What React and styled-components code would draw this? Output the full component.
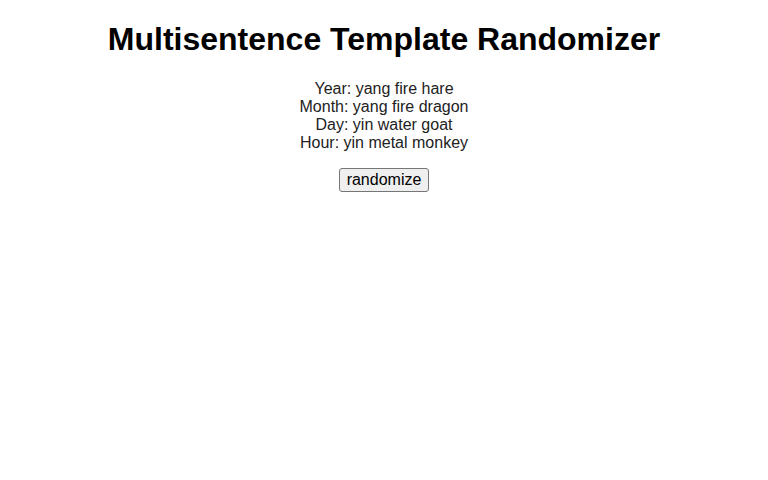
import React, { useState } from 'react';
import styled, { createGlobalStyle } from 'styled-components';

const GlobalStyle = createGlobalStyle`
	body {
		margin: 0;
		padding: 0 8px;
		font-family: 'Liberation Sans', Arial, sans-serif;
		background: #fff;
		color: #000;
	}
`;

const Page = styled.div`
	text-align: center;
`;

const Title = styled.h1`
	font-size: 32px;
	font-weight: bold;
	margin: 21.44px 0;
`;

const Lines = styled.div`
	font-size: 16px;
	line-height: 18px;
	color: #222;
`;

const Controls = styled.p`
	margin: 16px 0;
`;

const Button = styled.button`
	font-family: 'Liberation Sans', Arial, sans-serif;
	font-size: 16px;
	line-height: 18px;
	color: #000;
	padding: 2px 7px;
	background: #efefef;
	border: 1px solid #767676;
	border-radius: 3px;
	&:hover {
		background: #e5e5e5;
	}
`;

const polarity = ['yang', 'yin'];
const elements = ['wood', 'fire', 'earth', 'metal', 'water'];
const animals = ['rat', 'ox', 'tiger', 'hare', 'dragon', 'snake', 'horse', 'goat', 'monkey', 'rooster', 'dog', 'pig'];

const pick = (list) => list[Math.floor(Math.random() * list.length)];
const sentence = () => `${pick(polarity)} ${pick(elements)} ${pick(animals)}`;

const App = () => {
	const [pillars, setPillars] = useState({
		Year: 'yang fire hare',
		Month: 'yang fire dragon',
		Day: 'yin water goat',
		Hour: 'yin metal monkey',
	});

	const randomize = () => {
		setPillars({ Year: sentence(), Month: sentence(), Day: sentence(), Hour: sentence() });
	};

	return (
		<Page>
			<GlobalStyle />
			<Title>Multisentence Template Randomizer</Title>
			<Lines>
				{Object.entries(pillars).map(([label, value]) => (
					<div key={label}>
						{label}: {value}
					</div>
				))}
			</Lines>
			<Controls>
				<Button onClick={randomize}>randomize</Button>
			</Controls>
		</Page>
	);
};

export default App;
